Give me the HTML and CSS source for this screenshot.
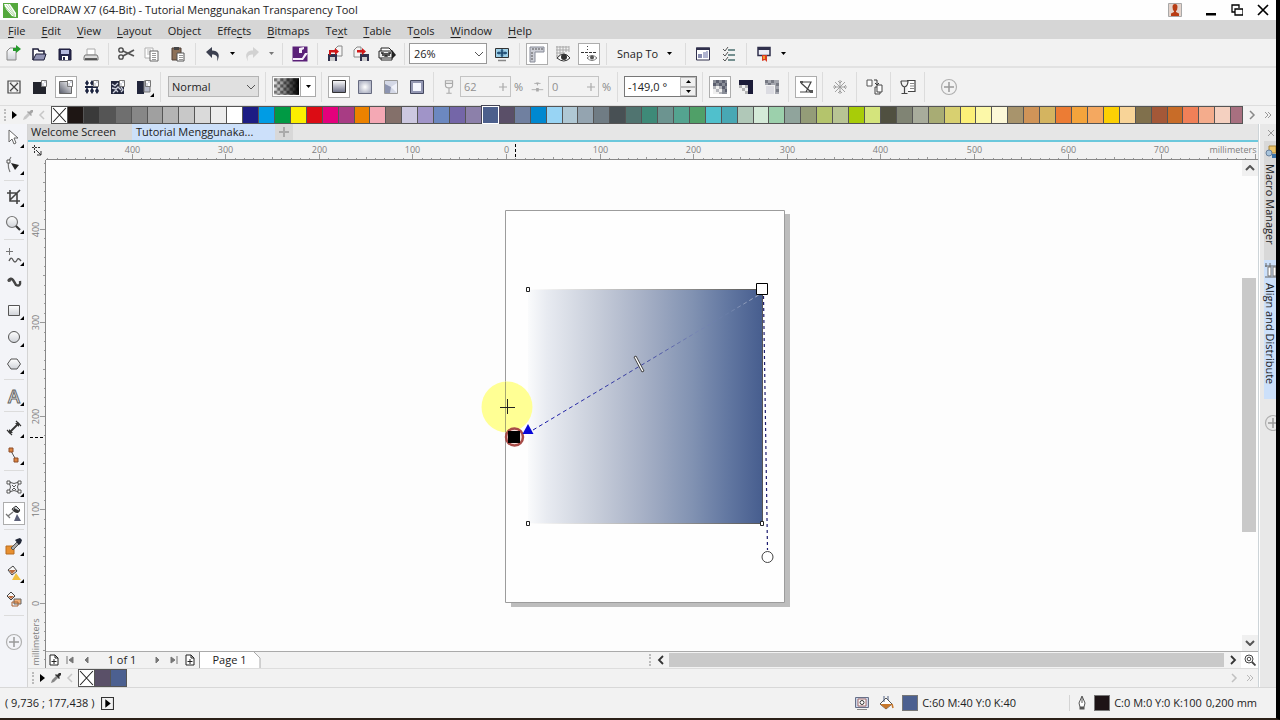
FILE: index.html
```
<!DOCTYPE html>
<html lang="en">
<head>
    <meta charset="UTF-8">
    <meta name="viewport" content="width=device-width, initial-scale=1.0">
    <title>CorelDRAW X7 (64-Bit) - Tutorial Menggunakan Transparency Tool</title>
    <link rel="stylesheet" href="styles.css">
</head>
<body>
    <!-- Shared gradients and symbols -->
    <svg class="defs" width="0" height="0" aria-hidden="true">
        <defs>
            <linearGradient id="gDown" x1="0" y1="0" x2="0" y2="1"><stop offset="0" stop-color="#fff"/><stop offset="1" stop-color="#6c7088"/></linearGradient>
            <linearGradient id="gSoft" x1="0" y1="0" x2="0" y2="1"><stop offset="0" stop-color="#fff"/><stop offset="1" stop-color="#cfd2d8"/></linearGradient>
            <linearGradient id="gDiag" x1="1" y1="0" x2="0" y2="1"><stop offset="0" stop-color="#fff"/><stop offset="1" stop-color="#555968"/></linearGradient>
            <linearGradient id="gBlack" x1="0" y1="0" x2="1" y2="0"><stop offset="0" stop-color="#000" stop-opacity="0.1"/><stop offset="1" stop-color="#000"/></linearGradient>
            <radialGradient id="gRound"><stop offset="0" stop-color="#fff"/><stop offset="1" stop-color="#b4b8c8"/></radialGradient>
            <pattern id="checks" width="6" height="6" patternUnits="userSpaceOnUse"><rect width="6" height="6" fill="#fff"/><path d="M0 0h3v3H0zM3 3h3v3H3z" fill="#888"/></pattern>
            <symbol id="down" viewBox="0 0 7 4"><path d="M0 0h7L3.500 4z"/></symbol>
            <symbol id="chev" viewBox="0 0 10 6"><path d="M1 1l4 4 4-4" fill="none" stroke="#555"/></symbol>
            <symbol id="plus" viewBox="0 0 18 18"><g fill="none" stroke="#b0b0b0"><circle cx="9" cy="9" r="7.500" stroke-width="1.200"/><path d="M9 4v10M4 9h10" stroke="#999" stroke-width="1.500"/></g></symbol>
            <symbol id="corner" viewBox="0 0 6 7"><path d="M.5.5h5v6h-5z" fill="#d8dae2" stroke="#777"/><path d="M1 1h2v2H1zM3 3h2v3H3z" fill="#fff"/></symbol>
            <symbol id="dropper" viewBox="0 0 12 12"><path d="M1 11l1-3 4-4 2 2-4 4z" fill="#888"/><path d="M5 3l1-1 1 1 2-2 2 0 0 2-2 2 1 1-1 1z" fill="#333"/></symbol>
            <symbol id="pageAdd" viewBox="0 0 10 12"><path d="M1 1h5l3 3v7H1zM6 1v3h3M5 5v5M2.500 7.500h5" fill="#fff" stroke="#222"/></symbol>
        </defs>
    </svg>

    <div class="app">
        <header class="title-bar">
            <svg class="logo" width="15" height="15" viewBox="0 0 15 15"><path d="M0 0h15v15H0z" fill="#54a83c"/><path d="M1 1h6l6 9v4l-4-1-6-7z" fill="#fff"/><path d="M3 2l9 11M5 1l7 11M1 3l10 10" stroke="#8cc878" stroke-width="0.600" fill="none"/></svg>
            <span class="title">CorelDRAW X7 (64-Bit) - Tutorial Menggunakan Transparency Tool</span>
            <button class="win-btn user" aria-label="Account"><svg width="14" height="14" viewBox="0 0 14 14"><path d="M.5.5h13v13H.5z" fill="#e4d4cc" stroke="#a8a8a8"/><path d="M4.500 4q0-3 2.500-3t2.500 3-1.500 4v1l3 1.500V13H3v-2.500L6 9V8Q4.500 7 4.500 4z" fill="#b83c14"/></svg></button>
            <button class="win-btn" aria-label="Minimize"><svg width="12" height="12" viewBox="0 0 12 12"><path d="M1 9h10v2.500H1z"/></svg></button>
            <button class="win-btn" aria-label="Restore"><svg width="12" height="12" viewBox="0 0 12 12"><path d="M8 4V1H1v7h3M4 5h8v6H4z" fill="none" stroke="#000" stroke-width="1.300"/></svg></button>
            <button class="win-btn" aria-label="Close"><svg width="12" height="12" viewBox="0 0 12 12"><path d="M1 1l10 10M11 1L1 11" fill="none" stroke="#000" stroke-width="1.700"/></svg></button>
        </header>

        <nav class="menu-bar">
            <button><u>F</u>ile</button>
            <button><u>E</u>dit</button>
            <button><u>V</u>iew</button>
            <button><u>L</u>ayout</button>
            <button>Ob<u>j</u>ect</button>
            <button>Effe<u>c</u>ts</button>
            <button><u>B</u>itmaps</button>
            <button>Te<u>x</u>t</button>
            <button><u>T</u>able</button>
            <button>T<u>o</u>ols</button>
            <button><u>W</u>indow</button>
            <button><u>H</u>elp</button>
        </nav>

        <!-- Standard toolbar -->
        <div class="toolbar">
            <button class="tool" aria-label="New"><svg viewBox="0 0 18 18"><path d="M3 6l3-3h6v12H3z" fill="url(#gSoft)" stroke="#888"/><path d="M8 5h3V2l5 4-5 4V8H8z" fill="#269a2c" transform="translate(1 -2)"/></svg></button>
            <button class="tool" aria-label="Open"><svg viewBox="0 0 18 18"><path d="M3 15V4h5l1 2h5v3" fill="#fff" stroke="#1c1c38" stroke-width="1.500"/><path d="M3 15l3-6h10l-2 6z" fill="#9294b4" stroke="#1c1c38"/></svg></button>
            <button class="tool" aria-label="Save"><svg viewBox="0 0 18 18"><path d="M3 4h11l1 1v10H3z" fill="#26264e" stroke="#1c1c38"/><path d="M5 5h8v4H5z" fill="#b4b8e0"/><path d="M6 11h6v4H6z" fill="#fff"/><path d="M7 12h2v3H7z" fill="#26264e"/></svg></button>
            <button class="tool" aria-label="Print"><svg viewBox="0 0 18 18"><path d="M5 4h8v6H5z" fill="#fff" stroke="#aaa"/><path d="M3 10h12l1 2v3H2v-3z" fill="#ddd" stroke="#777"/><path d="M3 14h12" stroke="#333" stroke-width="1.500"/></svg></button>
            <span class="sep"></span>
            <button class="tool" aria-label="Cut"><svg viewBox="0 0 18 18"><path d="M6 6l11 5M6 11l11-6" stroke="#555" stroke-width="1.800"/><circle cx="4" cy="5" r="2.200" fill="none" stroke="#444" stroke-width="1.300"/><circle cx="4" cy="12" r="2.200" fill="none" stroke="#444" stroke-width="1.300"/></svg></button>
            <button class="tool" aria-label="Copy"><svg viewBox="0 0 18 18"><path d="M2 3h8v10H2z" fill="#fff" stroke="#b0b0b0"/><path d="M4 5h4M4 7h4M4 9h4" stroke="#bbb"/><path d="M7 6h8v10H7z" fill="#fff" stroke="#666"/><path d="M9 8.500h4M9 10.500h4M9 12.500h4M9 14.500h4" stroke="#999"/></svg></button>
            <button class="tool" aria-label="Paste"><svg viewBox="0 0 18 18"><path d="M3 3h9v12H3z" fill="#8c7058" stroke="#4c3c34"/><path d="M5 2h5v3H5z" fill="#444"/><path d="M8 8h7v8H8z" fill="#fff" stroke="#555"/><path d="M10 10.500h4M10 12.500h4M10 14.500h4" stroke="#999"/></svg></button>
            <span class="sep"></span>
            <button class="tool" aria-label="Undo"><svg viewBox="0 0 18 18"><path d="M2 7l6-5v3.500c6 0 9 4 5 11 1-5 0-7-5-7V13z" fill="#3c4050"/></svg></button>
            <button class="drop" aria-label="Undo list"><svg><use href="#down"/></svg></button>
            <button class="tool" aria-label="Redo"><svg viewBox="0 0 18 18"><path d="M16 7l-6-5v3.500c-6 0-9 4-5 11-1-5 0-7 5-7V13z" fill="#d2d2d2"/></svg></button>
            <button class="drop muted" aria-label="Redo list"><svg><use href="#down"/></svg></button>
            <span class="sep"></span>
            <button class="tool" aria-label="Search content"><svg viewBox="0 0 18 18"><path d="M1.500 1.500h15v15h-15z" fill="#5a2078"/><path d="M13 2l-5 1v5h6l-3 5H2v2h10l5-7H11V5l2-1z" fill="#f6eefa"/></svg></button>
            <span class="sep"></span>
            <button class="tool" aria-label="Import"><svg viewBox="0 0 18 18"><path d="M9 7V4l3-3h4v10h-5z" fill="#f4f4f4" stroke="#888"/><path d="M2 9h9v7H2z" fill="#30304c"/><path d="M4 12h5v4H4z" fill="#ccc"/><path d="M3 5h6V3l4 3.500-4 3.500V7.500H5V10H3z" fill="#d01818"/></svg></button>
            <button class="tool" aria-label="Export"><svg viewBox="0 0 18 18"><path d="M2 5l3-3h4v10H2z" fill="#f4f4f4" stroke="#888"/><path d="M8 9h9v7H8z" fill="#30304c"/><path d="M10 12h5v4h-5z" fill="#ccc"/><path d="M5 5h5V3l4 3.500-4 3.500V7.500H5z" fill="#d01818"/></svg></button>
            <button class="tool" aria-label="Publish to PDF"><svg viewBox="0 0 18 18"><path d="M3 6V3h8l3 3v9H3z" fill="#fff" stroke="#222"/><path d="M1 6h13v7H1z" fill="#eee" stroke="#222"/><path d="M3 8h2v3M7 8v3h2V8M11 11V8h2" fill="none" stroke="#222" stroke-width="1.500"/><path d="M14 5l4 5-4 4z" fill="#222"/></svg></button>
            <span class="sep"></span>
            <span class="combo zoom-level">
                <select aria-label="Zoom level"><option>26%</option></select>
                <svg class="caret"><use href="#chev"/></svg>
            </span>
            <button class="tool" aria-label="Full-screen preview"><svg viewBox="0 0 18 18"><path d="M2.500 3.500h13v9h-13z" fill="#9ed0e8" stroke="#333"/><path d="M9 4v8M4 8h10" stroke="#16426a" stroke-width="1.300"/><path d="M7.500 6h3M7.500 10h3M6 6.500v3M12 6.500v3" stroke="#16426a"/><path d="M5 15.500h8" stroke="#888" stroke-width="1.500"/></svg></button>
            <span class="sep"></span>
            <button class="tool" aria-label="Show rulers" aria-pressed="true"><svg viewBox="0 0 18 18"><path d="M2 2h14v5H7v10H2z" fill="#ccced6" stroke="#888c98"/><path d="M5 3v2M8 3v2M11 3v2M14 3v2M3 8h2M3 11h2M3 14h2" stroke="#555"/></svg></button>
            <button class="tool" aria-label="Show grid"><svg viewBox="0 0 18 18"><path d="M2 2h13M2 5h13M2 8h9M2 11h4M3 1v13M6 1v10M9 1v7M12 1v6M15 1v6" stroke="#aaa"/><path d="M3 13q7-8 13 0-6 6-13 0z" fill="#fff" stroke="#333"/><circle cx="10" cy="12" r="3" fill="#333"/></svg></button>
            <button class="tool" aria-label="Show guidelines" aria-pressed="true"><svg viewBox="0 0 18 18"><path d="M1 7.500h16" stroke="#333" stroke-dasharray="3 1"/><path d="M7.500 1v14" stroke="#444" stroke-dasharray="1 2"/><path d="M7 13q5-5 10 0-5 5-10 0z" fill="#fff" stroke="#777"/><circle cx="12" cy="12.500" r="2" fill="#555"/></svg></button>
            <span class="sep"></span>
            <button class="snap">Snap To<svg><use href="#down"/></svg></button>
            <span class="sep"></span>
            <button class="tool" aria-label="Welcome screen"><svg viewBox="0 0 18 18"><path d="M2.500 3h13v12h-13z" fill="#fff" stroke="#30304c"/><path d="M2 2.500h14v2.500H2z" fill="#30304c"/><path d="M4 9h4v4H4z" fill="#888cb0"/><path d="M9 7h3v-1h2v7H9z" fill="#b0b4d0"/></svg></button>
            <button class="tool" aria-label="Options"><svg viewBox="0 0 18 18"><path d="M8 5h7M8 10h7M8 15h7" stroke="#4c7070" stroke-width="1.300"/><path d="M3 4l2 2 3-4M3 9l2 2 3-4M3 14l2 2 3-4" fill="none" stroke="#555"/></svg></button>
            <span class="sep"></span>
            <button class="tool" aria-label="Application launcher"><svg viewBox="0 0 18 18"><path d="M3 2.500h12v8H3z" fill="#eceef8" stroke="#30304c" stroke-width="1.500"/><path d="M3 3h12v2H3z" fill="#30304c"/><path d="M7 10h5v7l-2-2-3 1z" fill="#d83c24"/><path d="M8 11h2v3H8z" fill="#f09c30"/></svg></button>
            <button class="drop" aria-label="Launcher list"><svg><use href="#down"/></svg></button>
        </div>

        <!-- Property bar of the transparency tool -->
        <div class="toolbar property-bar">
            <button class="tool" aria-label="No transparency"><svg viewBox="0 0 18 18"><path d="M3 3h12v12H3zM5 5l8 8M13 5l-8 8" fill="none" stroke="#444" stroke-width="1.200"/><path d="M6 3v2M12 3v2M6 13v2M12 13v2" stroke="#999"/></svg></button>
            <button class="tool" aria-label="Uniform transparency"><svg viewBox="0 0 18 18"><path d="M2 4h13v12H2z" fill="#22242c"/><use href="#corner" x="10" y="2" width="6" height="7"/></svg></button>
            <button class="tool" aria-label="Fountain transparency" aria-pressed="true"><svg viewBox="0 0 18 18"><path d="M2.500 3.500h12v12h-12z" fill="url(#gDiag)" stroke="#666"/><use href="#corner" x="10" y="2" width="6" height="7"/></svg></button>
            <button class="tool" aria-label="Vector pattern transparency"><svg viewBox="0 0 18 18"><path d="M2 3h13v12H2z" fill="#fff"/><path d="M4 2l2 3-2 3-2-3zM9 2l2 3-2 3-2-3zM4 9l2 4-2 3-2-3zM9 9l2 4-2 3-2-3zM14 9l2 4-2 3-2-3zM2 8h13v2H2z" fill="#1c2440"/><use href="#corner" x="10" y="2" width="6" height="7"/></svg></button>
            <button class="tool" aria-label="Bitmap pattern transparency"><svg viewBox="0 0 18 18"><path d="M2 3h13v13H2z" fill="#22263c"/><path d="M3 6l3 2 3-3M3 10l4 1 2-2 3 3M4 15l3-3 2 2M12 9l2 3-2 2" fill="none" stroke="#ccd0dc" stroke-width="1.300"/><use href="#corner" x="10" y="2" width="6" height="7"/></svg></button>
            <button class="tool flyout" aria-label="Two-color pattern transparency"><svg viewBox="0 0 18 18"><path d="M2 3h7v13H2z" fill="#22263c"/><path d="M9 3h6v11H9z" fill="#b8bccb" stroke="#777"/><use href="#corner" x="10" y="2" width="6" height="7"/></svg></button>
            <span class="sep"></span>
            <span class="combo merge-mode">
                <select aria-label="Merge mode"><option>Normal</option></select>
                <svg class="caret"><use href="#chev"/></svg>
            </span>
            <span class="sep"></span>
            <button class="picker" aria-label="Transparency picker"><svg class="ramp" viewBox="0 0 24 16"><path d="M0 0h24v16H0z" fill="url(#checks)"/><path d="M0 0h24v16H0z" fill="url(#gBlack)"/></svg><svg class="arrow"><use href="#down"/></svg></button>
            <span class="sep"></span>
            <button class="tool" aria-label="Linear" aria-pressed="true"><svg viewBox="0 0 18 18"><path d="M2.500 2.500h13v12h-13z" fill="url(#gDown)" stroke="#333"/></svg></button>
            <button class="tool" aria-label="Elliptical"><svg viewBox="0 0 18 18"><path d="M2.500 2.500h13v13h-13z" fill="url(#gRound)" stroke="#666a80"/></svg></button>
            <button class="tool" aria-label="Conical"><svg viewBox="0 0 18 18"><path d="M2.500 2.500h13v13h-13z" fill="#d4d8e6" stroke="#999"/><path d="M9 9L3 6v9h5z" fill="#8c94b0"/><path d="M9 9l6-4v10z" fill="#f0f2fa"/></svg></button>
            <button class="tool" aria-label="Rectangular"><svg viewBox="0 0 18 18"><path d="M2.500 2.500h13v13h-13z" fill="#9498b4" stroke="#444860"/><path d="M5 5h8v8H5z" fill="#f4f6ff"/></svg></button>
            <span class="sep"></span>
            <label class="field-icon" for="nodeValue" aria-label="Node transparency"><svg viewBox="0 0 18 18"><path d="M5 2h8v5q0 3-4 3T5 7zM5 5h8M9 10v6M6 16h6" fill="none" stroke="#aaa" stroke-width="1.300"/></svg></label>
            <span class="field"><input id="nodeValue" type="text" value="62" disabled><svg viewBox="0 0 10 10"><path d="M0 5h10M5 0v10" stroke="#aaa" stroke-width="1.500"/></svg></span>
            <span class="unit">%</span>
            <label class="field-icon" for="nodePosition" aria-label="Node position"><svg viewBox="0 0 18 18"><path d="M3 12h13M6 5h7" stroke="#aaa"/><path d="M8 4h3l-1.500 4zM8 10h3v4H8z" fill="#aaa"/></svg></label>
            <span class="field"><input id="nodePosition" type="text" value="0" disabled><svg viewBox="0 0 10 10"><path d="M0 5h10M5 0v10" stroke="#aaa" stroke-width="1.500"/></svg></span>
            <span class="unit">%</span>
            <span class="sep"></span>
            <span class="spin">
                <input type="text" value="-149,0 °" aria-label="Rotate">
                <span class="spin-buttons">
                    <button aria-label="Increase"><svg class="flip"><use href="#down"/></svg></button>
                    <button aria-label="Decrease"><svg><use href="#down"/></svg></button>
                </span>
            </span>
            <span class="sep"></span>
            <button class="tool" aria-label="Transparency target all" aria-pressed="true"><svg viewBox="0 0 18 18"><path d="M2 2h14v14h-5V8H2z" fill="#8a8e98"/><path d="M5 2h3v3H5zM11 2h3v3h-3zM2 5h3v3H2zM8 5h3v3H8zM14 5h2v3h-2zM11 8h3v3h-3zM14 11h2v3h-2z" fill="#5c6070"/><path d="M2 8h9v8H2z" fill="#eee"/><path d="M2 8h3v3H2zM8 8h3v3H8zM5 11h3v3H5zM8 14h3v2H8z" fill="#b4b6bc"/></svg></button>
            <button class="tool" aria-label="Target fill"><svg viewBox="0 0 18 18"><path d="M2 2h14v14h-5V7H2z" fill="#1c1c38"/><path d="M2 7h3v3H2zM5 10h3v3H5zM8 7h3v3H8zM8 13h3v3H8z" fill="#b4b4b4"/></svg></button>
            <button class="tool" aria-label="Target outline"><svg viewBox="0 0 18 18"><path d="M2 2h14v14h-4V7H2z" fill="#a4a6ae"/><path d="M2 2h3v3H2zM8 2h3v3H8zM5 5h3v2H5zM13 5h3v3h-3zM13 11h3v3h-3z" fill="#777a84"/><path d="M3 8h8v8H3z" fill="#dcdce2"/></svg></button>
            <span class="sep"></span>
            <button class="tool" aria-label="Free scale and skew" aria-pressed="true"><svg viewBox="0 0 18 18"><path d="M4 4h10L9 14H3M4 14h11M4 5l10 9" fill="none" stroke="#444" stroke-width="1.200"/><path d="M3 3h3v2H3zM13 12h3v3h-3z" fill="#555"/></svg></button>
            <span class="sep"></span>
            <button class="tool" aria-label="Freeze transparency"><svg viewBox="0 0 18 18"><path d="M9 2v14M2 9h14M4 4l10 10M14 4L4 14M7 3l2 2 2-2M7 15l2-2 2 2M3 7l2 2-2 2M15 7l-2 2 2 2" fill="none" stroke="#999" stroke-width="0.900"/></svg></button>
            <span class="sep"></span>
            <button class="tool" aria-label="Copy transparency"><svg viewBox="0 0 18 18"><path d="M2 2h5v6H2z" fill="#fff" stroke="#555"/><path d="M9 2h3v4M10 5l2 2 2-2" fill="none" stroke="#333"/><path d="M12 7h5v7h-5z" fill="#fff" stroke="#444"/><path d="M12 9h-2v7h5v-2" fill="none" stroke="#444"/></svg></button>
            <span class="sep"></span>
            <button class="tool" aria-label="Edit transparency"><svg viewBox="0 0 18 18"><path d="M8 2.500h8v11H9" fill="#fff" stroke="#444" stroke-width="1.200"/><path d="M11 5.500h4M11 8h4M11 10.500h4" stroke="#888"/><path d="M2 3h7q0 5-3.500 6Q2 8 2 3M5.500 9v6M2.500 15.500h6" fill="none" stroke="#444" stroke-width="1.200"/></svg></button>
            <span class="sep"></span>
            <button class="tool add" aria-label="Quick customize"><svg><use href="#plus"/></svg></button>
        </div>

        <!-- Color palette -->
        <div class="palette-bar">
            <span class="grip"></span>
            <button class="mini" aria-label="Palette menu"><svg viewBox="0 0 8 10"><path d="M2 1l5 4-5 4z"/></svg></button>
            <button class="mini faded" aria-label="Pick color"><svg class="wide" viewBox="0 0 12 12"><use href="#dropper"/></svg></button>
            <button class="mini faded" aria-label="Scroll left"><svg viewBox="0 0 8 10"><path d="M6 1L2 5l4 4" fill="none" stroke="#888" stroke-width="1.500"/></svg></button>
            <div class="swatches" id="swatches"></div>
            <button class="mini end" aria-label="Scroll right"><svg viewBox="0 0 8 10"><path d="M2 1l4 4-4 4" fill="none" stroke="#888" stroke-width="1.500"/></svg></button>
            <button class="mini end" aria-label="Show all"><svg viewBox="0 0 8 10"><path d="M1 2l3 3-3 3M4 2l3 3-3 3" fill="none" stroke="#999"/></svg></button>
        </div>

        <div class="workspace">
            <aside class="toolbox">
                <button class="tool flyout" aria-label="Pick"><svg viewBox="0 0 18 18"><path d="M4 1v12l3-3 2 5 2-1-2-5h4z" fill="#fff" stroke="#666"/></svg></button>
                <button class="tool flyout" aria-label="Shape"><svg viewBox="0 0 18 18"><path d="M6 1Q1 8 5 16" fill="none" stroke="#777" stroke-width="1.200"/><path d="M2 4h3v3H2z" fill="#fff" stroke="#555"/><path d="M6 7l8 2-4 5z" fill="#222"/></svg></button>
                <span class="sep"></span>
                <button class="tool flyout" aria-label="Crop"><svg viewBox="0 0 18 18"><path d="M5 2v11h10M2 5h10v11M15 2L5 12" fill="none" stroke="#444" stroke-width="1.600"/></svg></button>
                <button class="tool flyout" aria-label="Zoom"><svg viewBox="0 0 18 18"><circle cx="7" cy="7" r="5.500" fill="url(#gSoft)" stroke="#777" stroke-width="1.200"/><path d="M11 11l4 4" stroke="#333" stroke-width="2.200"/></svg></button>
                <span class="sep"></span>
                <button class="tool flyout" aria-label="Freehand"><svg viewBox="0 0 18 18"><path d="M4.500 1v7M1 4.500h7" stroke="#777"/><path d="M4 14q2-5 4-1t4 0q1-3 4 1" fill="none" stroke="#555" stroke-width="1.300"/></svg></button>
                <button class="tool" aria-label="Artistic media"><svg viewBox="0 0 18 18"><path d="M3 7q3-4 5-1t3 5q5 2 4-4" fill="none" stroke="#444" stroke-width="2.400"/><path d="M3 7q2 1 3-1" fill="none" stroke="#555" stroke-width="1.500"/></svg></button>
                <button class="tool flyout" aria-label="Rectangle"><svg viewBox="0 0 18 18"><path d="M3.500 4.500h11v10h-11z" fill="url(#gSoft)" stroke="#555"/></svg></button>
                <button class="tool flyout" aria-label="Ellipse"><svg viewBox="0 0 18 18"><circle cx="9" cy="9" r="5.500" fill="url(#gSoft)" stroke="#555"/></svg></button>
                <button class="tool flyout" aria-label="Polygon"><svg viewBox="0 0 18 18"><path d="M6 4h6l3.500 5-3.500 5H6L2.500 9z" fill="url(#gSoft)" stroke="#555"/></svg></button>
                <span class="sep"></span>
                <button class="tool flyout letter" aria-label="Text">A</button>
                <span class="sep"></span>
                <button class="tool flyout" aria-label="Dimension"><svg viewBox="0 0 18 18"><path d="M4 14L14 4" stroke="#333" stroke-width="1.800"/><path d="M2 11l5 5M11 2l5 5" stroke="#333" stroke-width="1.200"/><path d="M4 10v4h4zM10 4h4v4z" fill="#333"/></svg></button>
                <button class="tool flyout" aria-label="Connector"><svg viewBox="0 0 18 18"><path d="M6 5l5 9" stroke="#555"/><path d="M4 2h4v4H4zM9 12h4v4H9z" fill="#dc8440" stroke="#8c4c28"/></svg></button>
                <span class="sep"></span>
                <button class="tool flyout" aria-label="Envelope"><svg viewBox="0 0 18 18"><path d="M4 4q5 3 10 0-3 5 0 10-5-3-10 0 3-5 0-10zM7 7l2 2 2-2M7 12l2-2 2 2" fill="none" stroke="#555"/><path d="M2 3h3v3H2zM13 3h3v3h-3zM2 12h3v3H2zM13 12h3v3h-3z" fill="#fff" stroke="#555"/></svg></button>
                <button class="tool" aria-label="Transparency" aria-pressed="true"><svg viewBox="0 0 18 18"><path d="M7 4l4-3 4 4q-2 4-5 2T7 4z" fill="#d4d8dc" stroke="#333"/><path d="M9 3l6 3-2 2-5-2z" fill="#333"/><path d="M8 7l-5 4M1 9l4 4" stroke="#777" stroke-width="1.300"/><path d="M12 9l4 7H9z" fill="#5c6078"/></svg></button>
                <span class="sep"></span>
                <button class="tool flyout" aria-label="Color eyedropper"><svg viewBox="0 0 18 18"><path d="M1 9h8v8H1z" fill="#e89030" stroke="#b86c20"/><path d="M6 11l6-6 2 2-6 6z" fill="#aaa" stroke="#555"/><path d="M10 3l2-1 3-1 2 2-1 3-2 2z" fill="#222838"/></svg></button>
                <button class="tool flyout" aria-label="Interactive fill"><svg viewBox="0 0 18 18"><path d="M3 6l5-4 4 5-5 4z" fill="#f8f8f8" stroke="#444"/><path d="M4 6h7l-4 4z" fill="#b8683c"/><path d="M11 9l5 7H7z" fill="#f0c040"/></svg></button>
                <button class="tool" aria-label="Smart fill"><svg viewBox="0 0 18 18"><path d="M2 5l4-4 4 4-4 4z" fill="#f8f8f8" stroke="#444"/><path d="M3 5h6L6 8z" fill="#b8683c"/><path d="M9 8h7v5H9z" fill="#f0b078" stroke="#666"/><path d="M7 11h6v4H7z" fill="none" stroke="#a86030"/></svg></button>
                <span class="sep"></span>
                <button class="tool add" aria-label="Customize toolbox"><svg><use href="#plus"/></svg></button>
            </aside>

            <main class="document">
                <div class="tabs">
                    <button class="tab">Welcome Screen</button>
                    <button class="tab active">Tutorial Menggunaka...</button>
                    <button class="tab new-tab" aria-label="New document"><svg viewBox="0 0 10 10"><path d="M5 0v10M0 5h10" stroke="#aaa" stroke-width="2"/></svg></button>
                </div>

                <div class="drawing">
                    <div class="ruler-origin"><svg viewBox="0 0 12 12"><path d="M1 2.500h9M3.500 0v9" stroke="#333" stroke-dasharray="2 1"/><path d="M5 5l5 5M10 6v4H6" fill="none" stroke="#333"/></svg></div>
                    <svg class="ruler-top" id="rulerTop"></svg>
                    <svg class="ruler-left" id="rulerLeft"></svg>

                    <svg class="canvas">
                        <defs>
                            <linearGradient id="fade"><stop offset="0" stop-color="#fafbfc"/><stop offset="0.080" stop-color="#e8ebf1"/><stop offset="0.300" stop-color="#c6ccd9"/><stop offset="0.500" stop-color="#a5afc5"/><stop offset="0.700" stop-color="#8192b2"/><stop offset="0.850" stop-color="#6277a1"/><stop offset="1" stop-color="#465d8e"/></linearGradient>
                            <linearGradient id="edge"><stop offset="0" stop-color="#fff"/><stop offset="1" stop-color="#555"/></linearGradient>
                            <linearGradient id="vector" gradientUnits="userSpaceOnUse" x1="482" y1="0" x2="716" y2="0"><stop offset="0" stop-color="#1414a8"/><stop offset="0.500" stop-color="#4046a0"/><stop offset="0.720" stop-color="#7886b4"/><stop offset="0.850" stop-color="#687ca6"/><stop offset="1" stop-color="#b0b8cc"/></linearGradient>
                        </defs>
                        <!-- page with its shadow -->
                        <path d="M465 54h279v393H465z" fill="#bdbdbd"/>
                        <path d="M459.500 50.500h279v392h-279z" fill="#fefefe" stroke="#9c9c9c"/>
                        <!-- square with the faded fill -->
                        <path d="M482 129h235v235H482z" fill="url(#fade)"/>
                        <path d="M482 129h235v1H482zM482 363h235v1H482z" fill="url(#edge)"/>
                        <path d="M716.500 130v234" stroke="#555"/>
                        <circle cx="461" cy="247" r="25.500" fill="#ffff94"/>
                        <path d="M459.500 222v50" stroke="#a8a870"/>
                        <path d="M461.500 239v15M454 247.500h15" stroke="#222"/>
                        <circle cx="468.500" cy="277" r="8.500" fill="#f4e0dc" stroke="#a84c48" stroke-width="2.500"/>
                        <path d="M462 271h12v12h-12z" fill="#000"/>
                        <path d="M487 270L716 133" fill="none" stroke="url(#vector)" stroke-dasharray="4 3"/>
                        <path d="M482 264l5.500 10h-11z" fill="#0808d8"/>
                        <path d="M717.500 136L721.500 390" fill="none" stroke="#1c1c70" stroke-width="1.200" stroke-dasharray="3 3"/>
                        <path d="M588 197l2-1 8 15-2 1z" fill="#fff" stroke="#444"/>
                        <path d="M710.500 123.500h11v11h-11z" fill="#fff" stroke="#000"/>
                        <path d="M480.500 127.500h3v4h-3zM480.500 361.500h3v4h-3zM714.500 361.500h3v4h-3z" fill="#fff" stroke="#222"/>
                        <circle cx="721.500" cy="397" r="5.500" fill="#fff" stroke="#444"/>
                    </svg>

                    <div class="scroll-v">
                        <button aria-label="Scroll up"><svg class="flip"><use href="#chev"/></svg></button>
                        <div class="track"><div class="thumb"></div></div>
                        <button aria-label="Scroll down"><svg><use href="#chev"/></svg></button>
                    </div>

                    <div class="page-bar">
                        <div class="page-nav">
                            <button aria-label="Add page before"><svg viewBox="0 0 10 12"><use href="#pageAdd"/></svg></button>
                            <button aria-label="First page"><svg viewBox="0 0 10 12"><path d="M2 2v8M8 3L4 6l4 3z" fill="#777" stroke="#777"/></svg></button>
                            <button aria-label="Previous page"><svg viewBox="0 0 10 12"><path d="M7 3L4 6l3 3z" fill="#777" stroke="#777"/></svg></button>
                            <span class="page-count">1 of 1</span>
                            <button aria-label="Next page"><svg viewBox="0 0 10 12"><path d="M3 3l3 3-3 3z" fill="#777" stroke="#777"/></svg></button>
                            <button aria-label="Last page"><svg viewBox="0 0 10 12"><path d="M8 2v8M2 3l4 3-4 3z" fill="#777" stroke="#777"/></svg></button>
                            <button aria-label="Add page after"><svg viewBox="0 0 10 12"><use href="#pageAdd"/></svg></button>
                            <button class="page-tab">Page 1</button>
                            <svg class="tab-edge" viewBox="0 0 8 16"><path d="M0 0h1l6 6v10H0z" fill="#fff"/><path d="M1 0l6 6v10" fill="none" stroke="#aaa"/></svg>
                        </div>
                        <span class="grip"></span>
                        <div class="scroll-h">
                            <button aria-label="Scroll left"><svg viewBox="0 0 8 10"><path d="M6 1L2 5l4 4" fill="none" stroke="#333" stroke-width="1.800"/></svg></button>
                            <div class="track"></div>
                            <button aria-label="Scroll right"><svg viewBox="0 0 8 10"><path d="M2 1l4 4-4 4" fill="none" stroke="#333" stroke-width="1.800"/></svg></button>
                        </div>
                        <button class="navigator" aria-label="Navigator"><svg viewBox="0 0 12 12"><circle cx="5" cy="5" r="4" fill="#fff" stroke="#444"/><circle cx="5" cy="5" r="1.800" fill="none" stroke="#444"/><path d="M8 8l3.500 3.500" stroke="#444" stroke-width="1.800"/></svg></button>
                    </div>
                </div>

                <div class="palette-bar doc-palette">
                    <span class="grip"></span>
                    <button class="mini" aria-label="Document palette menu"><svg viewBox="0 0 8 10"><path d="M2 1l5 4-5 4z"/></svg></button>
                    <button class="mini" aria-label="Pick color"><svg class="wide" viewBox="0 0 12 12"><use href="#dropper"/></svg></button>
                    <button class="mini faded" aria-label="Scroll left"><svg viewBox="0 0 8 10"><path d="M6 1L2 5l4 4" fill="none" stroke="#888" stroke-width="1.500"/></svg></button>
                    <div class="swatches" id="docSwatches"></div>
                    <button class="mini end faded" aria-label="Scroll right"><svg viewBox="0 0 8 10"><path d="M2 1l4 4-4 4" fill="none" stroke="#777" stroke-width="1.500"/></svg></button>
                    <button class="mini end faded" aria-label="Show all"><svg viewBox="0 0 8 10"><path d="M1 2l3 3-3 3M4 2l3 3-3 3" fill="none" stroke="#666"/></svg></button>
                </div>
            </main>

            <aside class="dockers">
                <button class="docker-close" aria-label="Close docker"><svg viewBox="0 0 8 8"><path d="M1 1l6 6M7 1L1 7" stroke="#999"/></svg></button>
                <button class="docker-tab"><svg viewBox="0 0 12 16"><path d="M5 2h7v7H5z" fill="#ecc468" stroke="#a88438"/><circle cx="5" cy="9" r="3" fill="#a8c4dc" stroke="#68809c"/><path d="M8 10h4v4H8z" fill="#3c74a8"/></svg><span>Macro Manager</span></button>
                <button class="docker-tab active"><svg viewBox="0 0 12 16"><path d="M1 3h11M2 0v4M6 0v4M1 14h11" stroke="#666"/><path d="M4 4h3v9H4zM9 4h3v9H9z" fill="#fff" stroke="#777"/></svg><span>Align and Distribute</span></button>
                <button class="docker-add" aria-label="Quick customize"><svg><use href="#plus"/></svg></button>
            </aside>
        </div>

        <footer class="status-bar">
            <span class="coords">( 9,736 ; 177,438 )</span>
            <button class="status-menu" aria-label="Status options"><svg viewBox="0 0 12 12"><path d="M.5.5h11v11H.5z" fill="none" stroke="#333"/><path d="M4 2l5 4-5 4z"/></svg></button>
            <div class="status-fill">
                <svg class="status-icon" viewBox="0 0 16 16"><path d="M1.500 2.500h13v10h-13z" fill="#c8d4e8" stroke="#687088"/><path d="M4 4h8v7H4z" fill="#fff" stroke="#a06868"/><circle cx="8" cy="7.500" r="2" fill="none" stroke="#333"/><path d="M3 14.500h10" stroke="#888"/></svg>
                <svg class="status-icon" viewBox="0 0 16 16"><path d="M2 9l6-6 6 6-6 5z" fill="#fff" stroke="#555"/><path d="M2 9h12l-6 5z" fill="#c8782c"/><path d="M6 1v6M10 1v4" stroke="#506080"/><path d="M14 9l1 4" stroke="#c8782c" stroke-width="1.500"/></svg>
                <i class="chip fill"></i>
                <span>C:60 M:40 Y:0 K:40</span>
            </div>
            <div class="status-outline">
                <svg class="status-icon" viewBox="0 0 16 16"><path d="M8 1l3 7-1 4H6L5 8zM8 2v6" fill="#fff" stroke="#555"/><path d="M5.500 12h5v2.500h-5z" fill="#555"/></svg>
                <i class="chip outline"></i>
                <span>C:0 M:0 Y:0 K:100</span>
                <span>0,200 mm</span>
            </div>
        </footer>
    </div>

    <script src="script.js"></script>
</body>
</html>
```

FILE: styles.css
```
* {
    margin: 0;
    padding: 0;
    box-sizing: border-box;
}

body {
    background: #000;
    font-family: 'Open Sans', 'Noto Sans', sans-serif;
    font-size: 11px;
    line-height: 16px;
    color: #222;
}

button, input, select {
    font: inherit;
    color: inherit;
    background: none;
    border: none;
    border-radius: 0;
}

svg {
    display: block;
    flex: none;
}

.defs {
    position: absolute;
}

.app {
    display: flex;
    flex-direction: column;
    height: 100vh;
    min-height: 700px;
    border-right: 4px solid #000;
    border-bottom: 2px solid #2c2018;
    background: #f2f2f2;
    overflow: hidden;
}

/* Title bar */
.title-bar {
    display: flex;
    align-items: center;
    height: 20px;
    flex: none;
    padding-left: 3px;
    background: #fefefe;
}

.title {
    flex: 1;
    margin-left: 4px;
    white-space: nowrap;
}

.win-btn {
    display: flex;
    justify-content: center;
    width: 26px;
}

.win-btn.user {
    margin-right: 10px;
}

/* Menu */
.menu-bar {
    display: flex;
    height: 19px;
    flex: none;
    align-items: center;
    padding-top: 2px;
    background: #d6d6d6;
}

.menu-bar button {
    padding: 0 8px;
}

.menu-bar u {
    text-underline-offset: 2px;
}

/* Toolbars */
.toolbar {
    display: flex;
    align-items: center;
    height: 29px;
    flex: none;
    padding-top: 2px;
    border-bottom: 2px solid #e2e2e2;
    background: #f2f2f2;
}

.property-bar {
    height: 37px;
    padding-top: 0;
    padding-left: 1px;
    border-bottom: none;
}

.tool {
    position: relative;
    display: flex;
    align-items: center;
    justify-content: center;
    width: 22px;
    height: 22px;
    margin: 0 2px;
    flex: none;
    border: 1px solid transparent;
}

.tool svg {
    width: 18px;
    height: 18px;
}

.tool[aria-pressed="true"] {
    background: #fff;
    border-color: #adadad;
}

.flyout::after {
    content: '';
    position: absolute;
    right: 0;
    bottom: 0;
    border: 2px solid #000;
    border-top-color: transparent;
    border-left-color: transparent;
}

.sep {
    width: 1px;
    height: 22px;
    margin: 0 4px;
    background: #dcdcdc;
    flex: none;
}

.property-bar .sep {
    height: 30px;
    margin: 0 4px 0 3px;
}

.drop {
    width: 13px;
    display: flex;
    justify-content: center;
}

.drop svg, .snap svg, .picker .arrow, .spin svg {
    width: 5px;
    height: 3px;
}

.muted {
    opacity: 0.5;
}

.flip {
    transform: rotate(180deg);
}

.snap {
    display: flex;
    align-items: center;
    gap: 9px;
    padding: 0 9px 0 6px;
    white-space: nowrap;
}

.combo {
    position: relative;
    flex: none;
}

.combo select {
    appearance: none;
    width: 100%;
    height: 21px;
    padding: 0 4px;
    border: 1px solid #999;
    background: #fff;
}

.combo .caret {
    position: absolute;
    right: 3px;
    top: 8px;
    width: 10px;
    height: 6px;
    pointer-events: none;
}

.zoom-level {
    width: 78px;
    margin-right: 2px;
}

.merge-mode {
    width: 91px;
    margin: 0 3px;
}

.merge-mode select {
    padding: 0 3px;
    background: #e0e0e0;
    border-color: #b4b4b4;
}

.picker {
    display: flex;
    align-items: center;
    width: 44px;
    height: 21px;
    margin: 0 2px;
    border: 1px solid #aaa;
    background: #fff;
}

.picker .ramp {
    width: 28px;
    height: 19px;
    padding: 1px;
    border-right: 1px solid #aaa;
}

.picker .arrow {
    margin-left: 5px;
}

.field-icon {
    width: 22px;
    display: flex;
    justify-content: center;
}

.field-icon svg {
    width: 16px;
    height: 16px;
}

.field {
    display: flex;
    align-items: center;
    width: 51px;
    height: 21px;
    padding: 0 3px;
    border: 1px solid #c4c4c4;
}

.field input {
    flex: 1;
    min-width: 0;
    color: #909090;
}

.field svg {
    width: 8px;
    height: 8px;
}

.unit {
    width: 15px;
    text-align: center;
    color: #888;
}

.spin {
    display: flex;
    width: 73px;
    height: 21px;
    margin: 0 2px;
    border: 1px solid #777;
    background: #fff;
}

.spin input {
    flex: 1;
    min-width: 0;
    padding-left: 3px;
}

.spin-buttons {
    display: flex;
    flex-direction: column;
    width: 16px;
}

.spin-buttons button {
    flex: 1;
    display: flex;
    align-items: center;
    justify-content: center;
    border: 1px solid #bbb;
    background: #f0f0f0;
}

.property-bar .add {
    margin-left: 9px;
}

/* Palettes */
.palette-bar {
    display: flex;
    align-items: center;
    height: 19px;
    flex: none;
    padding-left: 4px;
    border-top: 1px solid #ddd;
}

.grip {
    width: 3px;
    height: 12px;
    flex: none;
    border-left: 2px dotted #bbb;
}

.mini {
    display: flex;
    justify-content: center;
    width: 14px;
    flex: none;
}

.mini svg {
    width: 8px;
    height: 10px;
}

.mini .wide {
    width: 12px;
    height: 12px;
}

.mini.faded {
    opacity: 0.4;
}

.mini.end {
    width: 16px;
}

.swatches {
    display: flex;
    flex: 1;
    height: 18px;
    margin-left: 2px;
    margin-right: 1px;
}

.swatch {
    flex: 1;
    min-width: 0;
    border: 1px solid #555;
    border-left-width: 0;
}

.swatch.none {
    border-left-width: 1px;
    background: #fff;
}

.swatch.none svg {
    width: 100%;
    height: 100%;
}

.swatch.selected {
    border: 1px solid #fff;
    outline: 1px solid #445;
}

.swatch.cut {
    flex: 0.75;
}

/* Workspace */
.workspace {
    display: flex;
    flex: 1;
    min-height: 0;
}

.toolbox {
    display: flex;
    flex-direction: column;
    align-items: center;
    width: 28px;
    padding-left: 1px;
    flex: none;
    border-right: 1px solid #d4d4d4;
    background: #f3f4f8;
}

.toolbox .tool {
    height: 23px;
    margin: 2px 0;
}

.toolbox .sep {
    width: 20px;
    height: 1px;
    margin: 2px 0;
}

.toolbox .add {
    margin-top: 12px;
}

.letter {
    font-size: 18px;
    font-weight: 600;
    line-height: 20px;
    color: #f4f4f4;
    -webkit-text-stroke: 1px #666;
}

.document {
    display: flex;
    flex-direction: column;
    flex: 1;
    min-width: 0;
    border-right: 1px solid #cdd4d8;
}

.tabs {
    display: flex;
    height: 18px;
    flex: none;
    border-bottom: 2px solid #6cc8dc;
    background: #e6e6e6;
}

.tab {
    width: 104px;
    padding-left: 3px;
    text-align: left;
    white-space: nowrap;
    background: #d8d8d8;
}

.tab.active {
    width: 143px;
    padding-left: 4px;
    background: #cce0fa;
}

.tab.new-tab {
    display: flex;
    align-items: center;
    justify-content: center;
    width: 18px;
    padding: 0;
}

.new-tab svg {
    width: 10px;
    height: 10px;
}

.drawing {
    display: grid;
    grid-template-columns: 18px 1fr 16px;
    grid-template-rows: 18px 1fr 17px;
    flex: 1;
    min-height: 0;
}

.ruler-origin {
    display: flex;
    align-items: center;
    justify-content: center;
}

.ruler-origin svg {
    width: 12px;
    height: 12px;
}

.ruler-top {
    grid-column: 2 / 4;
    width: 100%;
    height: 18px;
    border-bottom: 1px solid #888;
}

.ruler-left {
    grid-row: 2 / 4;
    width: 18px;
    height: 100%;
    border-right: 1px solid #888;
}

.ruler-top text, .ruler-left text {
    font-size: 9px;
    fill: #808080;
    text-anchor: middle;
}

.canvas {
    width: 100%;
    height: 100%;
    background: #fdfdfd;
}

.scroll-v {
    display: flex;
    flex-direction: column;
    background: #fdfdfd;
}

.scroll-v button {
    display: flex;
    align-items: center;
    justify-content: center;
    height: 16px;
    background: #f0f0f0;
}

.scroll-v svg {
    width: 10px;
    height: 6px;
    stroke-width: 2px;
}

.scroll-v .track {
    display: grid;
    grid-template-rows: 102fr 254fr 103fr;
    flex: 1;
}

.scroll-v .thumb {
    grid-row: 2;
    width: 14px;
    background: #c9c9c9;
}

.page-bar {
    grid-column: 2 / 4;
    display: flex;
    align-items: center;
    border-top: 1px solid #aaa;
}

.page-nav {
    display: flex;
    align-items: center;
    flex: 1;
    height: 100%;
}

.page-nav button {
    display: flex;
    justify-content: center;
    width: 16px;
}

.page-nav svg {
    width: 10px;
    height: 12px;
}

.page-count {
    width: 56px;
    text-align: center;
}

.page-nav .page-tab {
    width: 54px;
    height: 16px;
    margin-left: 1px;
    padding-left: 6px;
    align-items: center;
    border-left: 1px solid #999;
    background: #fff;
}

.page-nav .tab-edge {
    width: 8px;
    height: 16px;
}

.scroll-h {
    display: flex;
    align-items: center;
    flex: 0 0 589px;
    height: 100%;
}

.scroll-h button, .navigator {
    display: flex;
    align-items: center;
    justify-content: center;
    width: 17px;
    height: 100%;
}

.scroll-h svg {
    width: 8px;
    height: 10px;
}

.scroll-h .track {
    flex: 1;
    height: 14px;
    background: #c9c9c9;
}

.navigator svg {
    width: 12px;
    height: 12px;
}

.navigator {
    background: #fff;
}

.doc-palette .swatches {
    flex: 0 0 49px;
    margin-left: 1px;
    margin-right: auto;
}

/* Dockers */
.dockers {
    display: flex;
    flex-direction: column;
    width: 17px;
    padding-left: 4px;
    flex: none;
    background: #e8e8e8;
    border-left: 1px solid #fff;
    overflow: hidden;
}

.docker-close {
    height: 17px;
    padding-left: 3px;
}

.docker-close svg {
    width: 8px;
    height: 8px;
}

.docker-tab {
    display: flex;
    flex-direction: column;
    height: 119px;
    padding-top: 3px;
    background: #d8d8d8;
}

.docker-tab.active {
    height: 139px;
    background: #cce0fa;
}

.docker-tab svg {
    width: 12px;
    height: 16px;
    margin-bottom: 4px;
}

.docker-tab span {
    writing-mode: vertical-rl;
    line-height: 12px;
    white-space: nowrap;
}

.docker-add {
    margin-top: 15px;
}

.docker-add svg {
    width: 18px;
    height: 18px;
}

/* Status bar */
.status-bar {
    display: flex;
    align-items: center;
    height: 31px;
    flex: none;
    border-top: 1px solid #d8d8d8;
    padding: 0 19px 0 5px;
}

.coords {
    min-width: 84px;
    white-space: nowrap;
}

.status-menu {
    margin-left: 7px;
}

.status-menu svg {
    width: 13px;
    height: 13px;
}

.status-fill, .status-outline {
    display: flex;
    align-items: center;
    gap: 4px;
    white-space: nowrap;
}

.status-fill {
    width: 215px;
    margin-left: auto;
}

.status-outline {
    padding-left: 4px;
    border-left: 1px solid #d4d4d4;
}

.status-icon {
    width: 16px;
    height: 16px;
}

.status-fill .status-icon {
    margin-right: 4px;
}

.chip {
    width: 16px;
    height: 16px;
    border: 1px solid #777;
}

.chip.fill {
    background: #4c6090;
}

.chip.outline {
    background: #1e1416;
}
```

FILE: script.js
```
const COLORS = [
    'none', '#1e1614', '#3a3a3a', '#555555', '#6f6f6f', '#878787', '#a0a0a0', '#b4b4b4', '#c8c8c8', '#dadada',
    '#ededed', '#ffffff', '#1c1c84', '#009ce4', '#009a44', '#fcee00', '#dc0c14', '#e4007c', '#a83c84', '#ec8200',
    '#f4a8b4', '#84706a', '#ccc8e0', '#a094c8', '#6c88c0', '#7466a8', '#8c80aa', '#4c5f8c', '#5a4f68', '#7080a0',
    '#0088d0', '#98d4f4', '#b0c8d4', '#94a4b0', '#707c84', '#485054', '#507470', '#3e8a78', '#6c9490', '#54a490',
    '#50a068', '#50c0cc', '#48a8b4', '#b0c8b8', '#d4ead8', '#9cd0ac', '#90a49c', '#949c78', '#b4c46c', '#b8c494',
    '#a8cc08', '#d4e47c', '#505040', '#808474', '#a8ac9c', '#a8ac74', '#d8d070', '#fcf078', '#fcf8a8', '#fcf8d8',
    '#a8946c', '#d09458', '#d4b460', '#ec7c34', '#f4a43c', '#f4a860', '#fcd004', '#f8d498', '#80704c', '#a45838',
    '#c86c28', '#f08058', '#f4ac8c', '#f4d0c0', '#a87080'
];
const SELECTED = 27;
const STEP = 93.6; // pixels per 100 mm at 26% zoom

function addSwatches(id, colors) {
    const row = document.getElementById(id);
    colors.forEach(color => {
        const item = document.createElement('button');
        item.className = 'swatch';
        item.setAttribute('aria-label', color);
        if (color === 'none') {
            item.classList.add('none');
            item.innerHTML = '<svg viewBox="0 0 14 16" preserveAspectRatio="none"><path d="M1 1l12 14M13 1L1 15" stroke="#222"/></svg>';
        } else {
            item.style.background = color;
        }
        row.appendChild(item);
    });
    return row;
}

// Ruler ticks every 10 mm, numbers every 100 mm
function drawRuler(id, origin, length, vertical, cursor, units) {
    let out = '';
    for (let n = -50; n <= 90; n++) {
        const at = Math.round(origin + n * STEP / 10) + 0.5;
        if (at < 0 || at > length) continue;
        const major = n % 10 === 0;
        const size = major ? 5 : n % 5 === 0 ? 2 : 1;
        out += vertical
            ? `<path d="M${17 - size} ${at}h${size}" stroke="#999"/>`
            : `<path d="M${at} ${17 - size}v${size}" stroke="#999"/>`;
        if (!major || (vertical && at > length - 40) || (!vertical && at > length - 50)) continue;
        const label = Math.abs(n * 10);
        out += vertical
            ? `<text transform="translate(11 ${at}) rotate(-90)">${label}</text>`
            : `<text x="${at}" y="11">${label}</text>`;
    }
    out += vertical
        ? `<path d="M2 ${cursor}h14" stroke="#000" stroke-dasharray="3 2"/><text transform="translate(11 ${units}) rotate(-90)">millimeters</text>`
        : `<path d="M${cursor} 2v14" stroke="#000" stroke-dasharray="3 2"/><text x="${units}" y="11">millimeters</text>`;
    document.getElementById(id).innerHTML = out;
}

const palette = addSwatches('swatches', COLORS);
palette.children[SELECTED].classList.add('selected');
palette.lastChild.classList.add('cut');
addSwatches('docSwatches', ['none', '#5a5068', '#4c6090']);

drawRuler('rulerTop', 460, 1212, false, 469.5, 1187);
drawRuler('rulerLeft', 443, 510, true, 277.5, 482);
```
